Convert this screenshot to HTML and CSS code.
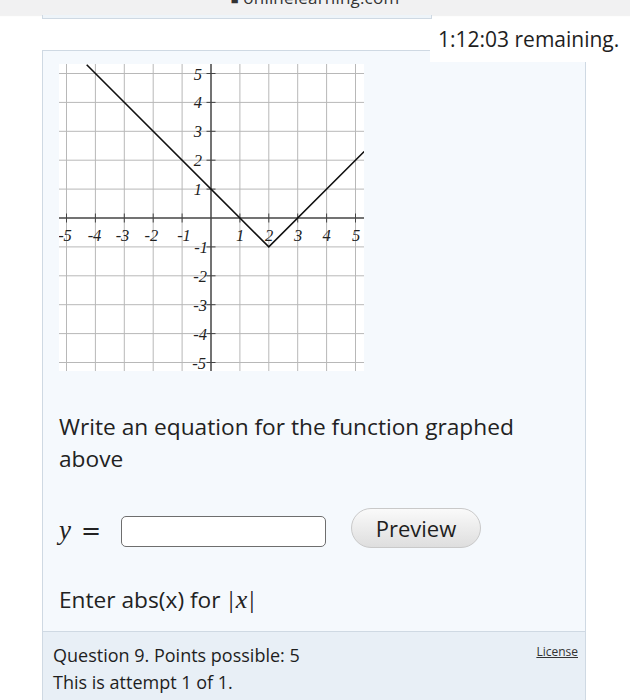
FILE: index.html
```html
<!DOCTYPE html>
<html>
<head>
<meta charset="utf-8">
<link rel="stylesheet" href="styles.css">
</head>
<body>
<div class="topbar"><div class="url"><span class="lock">&#9632;</span> onlinelearning.com</div></div>
<div class="prev"></div>
<div class="timer">1:12:03 remaining.</div>
<div class="qbox">
  <div class="qbody">
    <svg class="graph" width="305" height="307" viewBox="0 0 305 307" xmlns="http://www.w3.org/2000/svg">
      <rect x="0" y="0" width="305" height="307" fill="#ffffff"/>
      <g stroke="#b8b8b8" stroke-width="1">
        <line x1="7.5" y1="0" x2="7.5" y2="307"/>
        <line x1="36.4" y1="0" x2="36.4" y2="307"/>
        <line x1="65.3" y1="0" x2="65.3" y2="307"/>
        <line x1="94.2" y1="0" x2="94.2" y2="307"/>
        <line x1="123.1" y1="0" x2="123.1" y2="307"/>
        <line x1="180.9" y1="0" x2="180.9" y2="307"/>
        <line x1="209.8" y1="0" x2="209.8" y2="307"/>
        <line x1="238.7" y1="0" x2="238.7" y2="307"/>
        <line x1="267.6" y1="0" x2="267.6" y2="307"/>
        <line x1="296.5" y1="0" x2="296.5" y2="307"/>
        <line x1="0" y1="9.5" x2="305" y2="9.5"/>
        <line x1="0" y1="38.4" x2="305" y2="38.4"/>
        <line x1="0" y1="67.3" x2="305" y2="67.3"/>
        <line x1="0" y1="96.2" x2="305" y2="96.2"/>
        <line x1="0" y1="125.1" x2="305" y2="125.1"/>
        <line x1="0" y1="182.9" x2="305" y2="182.9"/>
        <line x1="0" y1="211.8" x2="305" y2="211.8"/>
        <line x1="0" y1="240.7" x2="305" y2="240.7"/>
        <line x1="0" y1="269.6" x2="305" y2="269.6"/>
        <line x1="0" y1="298.5" x2="305" y2="298.5"/>
      </g>
      <g stroke="#444444" stroke-width="1.5">
        <line x1="0" y1="154" x2="305" y2="154"/>
        <line x1="152" y1="0" x2="152" y2="307"/>
      </g>
      <g stroke="#444444" stroke-width="1">
        <line x1="7.5" y1="149.5" x2="7.5" y2="158.5"/>
        <line x1="36.4" y1="149.5" x2="36.4" y2="158.5"/>
        <line x1="65.3" y1="149.5" x2="65.3" y2="158.5"/>
        <line x1="94.2" y1="149.5" x2="94.2" y2="158.5"/>
        <line x1="123.1" y1="149.5" x2="123.1" y2="158.5"/>
        <line x1="180.9" y1="149.5" x2="180.9" y2="158.5"/>
        <line x1="209.8" y1="149.5" x2="209.8" y2="158.5"/>
        <line x1="238.7" y1="149.5" x2="238.7" y2="158.5"/>
        <line x1="267.6" y1="149.5" x2="267.6" y2="158.5"/>
        <line x1="296.5" y1="149.5" x2="296.5" y2="158.5"/>
        <line x1="147.5" y1="9.5" x2="156.5" y2="9.5"/>
        <line x1="147.5" y1="38.4" x2="156.5" y2="38.4"/>
        <line x1="147.5" y1="67.3" x2="156.5" y2="67.3"/>
        <line x1="147.5" y1="96.2" x2="156.5" y2="96.2"/>
        <line x1="147.5" y1="125.1" x2="156.5" y2="125.1"/>
        <line x1="147.5" y1="182.9" x2="156.5" y2="182.9"/>
        <line x1="147.5" y1="211.8" x2="156.5" y2="211.8"/>
        <line x1="147.5" y1="240.7" x2="156.5" y2="240.7"/>
        <line x1="147.5" y1="269.6" x2="156.5" y2="269.6"/>
        <line x1="147.5" y1="298.5" x2="156.5" y2="298.5"/>
      </g>
      <polyline points="27.7,0.8 209.8,182.9 305.2,87.5" fill="none" stroke="#111111" stroke-width="1.6"/>
      <g class="lbl" text-anchor="middle">
        <text x="6" y="177">-5</text>
        <text x="35.5" y="177">-4</text>
        <text x="63.5" y="177">-3</text>
        <text x="92.3" y="177">-2</text>
        <text x="125" y="177">-1</text>
        <text x="181" y="177">1</text>
        <text x="210" y="177">2</text>
        <text x="239" y="177">3</text>
        <text x="267.5" y="177">4</text>
        <text x="297" y="177">5</text>
      </g>
      <g class="lbl" text-anchor="end">
        <text x="143" y="15.5">5</text>
        <text x="143" y="44.4">4</text>
        <text x="143" y="73.3">3</text>
        <text x="143" y="102.2">2</text>
        <text x="143" y="131.1">1</text>
        <text x="149" y="189">-1</text>
        <text x="148" y="217.8">-2</text>
        <text x="148" y="246.7">-3</text>
        <text x="148" y="275.6">-4</text>
        <text x="147" y="304.5">-5</text>
      </g>
    </svg>
    <p class="question">Write an equation for the function graphed above</p>
    <div class="answer-row">
      <span class="math eq"><i class="mi">y</i><span class="mo">=</span></span>
      <span class="input"></span>
      <span class="btn">Preview</span>
    </div>
    <p class="hint">Enter abs(x) for <span class="math abs"><span class="bar">|</span><i class="mi">x</i><span class="bar">|</span></span></p>
  </div>
  <div class="qfoot">
    <div class="qinfo">
      <div>Question 9. Points possible: 5</div>
      <div>This is attempt 1 of 1.</div>
    </div>
    <a class="license">License</a>
  </div>
</div>
</body>
</html>
```

FILE: styles.css
```css
html, body {
  margin: 0;
  padding: 0;
  background: #ffffff;
}
body {
  font-family: "Open Sans", "Noto Sans", sans-serif;
  color: #222222;
  position: relative;
  width: 630px;
  height: 700px;
  overflow: hidden;
}
.topbar {
  height: 15px;
  background: #f1f1f2;
  overflow: hidden;
  box-shadow: 0 1px 1px rgba(0,0,0,0.05);
}
.url {
  text-align: center;
  font-size: 17px;
  line-height: 17px;
  margin-top: -11px;
  color: #333333;
  letter-spacing: 0.2px;
}
.lock {
  font-size: 13px;
}
.prev {
  margin-left: 42px;
  width: 388px;
  height: 3px;
  background: #eef4f9;
  border: 1px solid #cfd9e3;
  border-top: none;
}
.timer {
  position: absolute;
  top: 19px;
  right: 0;
  width: 192px;
  height: 43px;
  padding-left: 8px;
  background: #ffffff;
  font-size: 21px;
  line-height: 40px;
  color: #1e1e1e;
  z-index: 2;
}
.qbox {
  margin-top: 31px;
  margin-left: 42px;
  width: 544px;
  box-sizing: border-box;
  border: 1px solid #cfd9e3;
}
.qbody {
  background: #f5f9fd;
  padding: 13px 16px 15px 16px;
}
.graph {
  display: block;
}
.lbl {
  font-family: "Liberation Serif", "DejaVu Serif", serif;
  font-style: italic;
  font-size: 16.5px;
  fill: #222222;
}
.question {
  margin: 40px 0 0 0;
  font-size: 22.7px;
  line-height: 32px;
  width: 470px;
}
.answer-row {
  display: flex;
  align-items: flex-start;
  margin-top: 33px;
  height: 40px;
}
.math {
  font-family: "Liberation Serif", "DejaVu Serif", serif;
}
.mi {
  font-style: italic;
}
.eq {
  display: flex;
  align-items: baseline;
  font-size: 27px;
  line-height: 40px;
  width: 62px;
  margin-top: 2px;
}
.eq .mo {
  font-family: "DejaVu Serif", serif;
  font-size: 24px;
  margin-left: 10px;
}
.input {
  display: block;
  width: 205px;
  height: 31px;
  box-sizing: border-box;
  margin-top: 8px;
  border: 1.5px solid #6e6e6e;
  border-radius: 5px;
  background: #ffffff;
}
.btn {
  display: block;
  width: 130px;
  height: 40px;
  box-sizing: border-box;
  margin-left: 25px;
  border: 1px solid #c9c9c9;
  border-radius: 20px;
  background: linear-gradient(#fafafa, #dedede);
  font-size: 22px;
  line-height: 38px;
  text-align: center;
  color: #1e1e1e;
}
.hint {
  margin: 36px 0 0 0;
  font-size: 22.7px;
  line-height: 32px;
}
.abs {
  font-size: 26px;
}
.abs .bar {
  font-style: normal;
  margin: 0 2px;
}
.qfoot {
  display: flex;
  justify-content: space-between;
  align-items: flex-start;
  background: #e8eff6;
  border-top: 1px solid #cfd9e3;
  padding: 10px 7px 12px 10px;
  font-size: 18px;
  line-height: 27px;
  color: #1e1e1e;
}
.license {
  font-size: 12px;
  line-height: 16px;
  margin-top: 2px;
  color: #333333;
  text-decoration: underline;
}
```
